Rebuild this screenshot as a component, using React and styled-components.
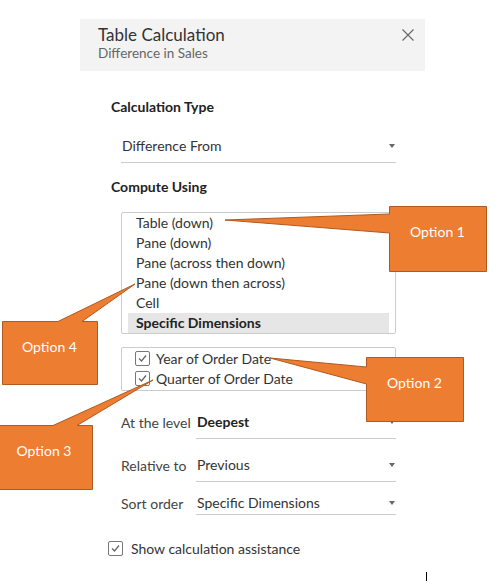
import styled, { createGlobalStyle } from "styled-components";

const GlobalStyle = createGlobalStyle`
  html, body {
    margin: 0;
    padding: 0;
    background: #ffffff;
  }
  body {
    font-family: Lato, "Open Sans", sans-serif;
    color: #333333;
  }
`;

const computeOptions = [
  "Table (down)",
  "Pane (down)",
  "Pane (across then down)",
  "Pane (down then across)",
  "Cell",
  "Specific Dimensions",
];

const dimensions = ["Year of Order Date", "Quarter of Order Date"];

const callouts = [
  { label: "Option 1", left: 389, top: 206, width: 97, d: "M389.5,206.5 H486.5 V271.5 H389.5 V233 L225,220 L389.5,214 Z" },
  { label: "Option 2", left: 366, top: 357, width: 97, d: "M366.5,357.5 H463.5 V421.5 H366.5 V384 L270,358 L366.5,367 Z" },
  { label: "Option 4", left: 2, top: 321, width: 95, d: "M2.5,321.5 H58 L135,284 L82,321.5 H97.5 V384.5 H2.5 Z" },
  { label: "Option 3", left: -4, top: 425, width: 96, d: "M-4,425.5 H53 L153,380 L77,425.5 H92.5 V489.5 H-4 Z" },
];

export default function App() {
  return (
    <>
      <GlobalStyle />
      <Page>
        <Header>
          <div>
            <Title>Table Calculation</Title>
            <Subtitle>Difference in Sales</Subtitle>
          </div>
          <Close viewBox="0 0 12 12">
            <path d="M0.5 0.5 L11.5 11.5 M11.5 0.5 L0.5 11.5" />
          </Close>
        </Header>

        <Body>
          <SectionTitle $top={27}>Calculation Type</SectionTitle>
          <Select>
            <span>Difference From</span>
            <Caret />
          </Select>

          <SectionTitle $top={15}>Compute Using</SectionTitle>
          <ListBox>
            {computeOptions.map((option, index) => (
              <ListRow key={index} $selected={index === computeOptions.length - 1}>
                {option}
              </ListRow>
            ))}
          </ListBox>

          <CheckList>
            {dimensions.map((dim, index) => (
              <CheckRow key={index}>
                <CheckBox />
                <span>{dim}</span>
              </CheckRow>
            ))}
          </CheckList>

          <FieldRow $top={14} $height={34}>
            <FieldLabel>At the level</FieldLabel>
            <FieldValue $bold>
              <span>Deepest</span>
              <Caret />
            </FieldValue>
          </FieldRow>
          <FieldRow $top={9} $height={34}>
            <FieldLabel>Relative to</FieldLabel>
            <FieldValue>
              <span>Previous</span>
              <Caret />
            </FieldValue>
          </FieldRow>
          <FieldRow $top={9} $height={24}>
            <FieldLabel>Sort order</FieldLabel>
            <FieldValue>
              <span>Specific Dimensions</span>
              <Caret />
            </FieldValue>
          </FieldRow>

          <AssistRow>
            <CheckBox />
            <span>Show calculation assistance</span>
          </AssistRow>
        </Body>

        <Overlay viewBox="0 0 497 581">
          {callouts.map((c, index) => (
            <path key={index} d={c.d} />
          ))}
        </Overlay>
        {callouts.map((c, index) => (
          <CalloutLabel key={index} style={{ left: c.left, top: c.top, width: c.width }}>
            {c.label}
          </CalloutLabel>
        ))}
        <Cursor />
      </Page>
    </>
  );
}

function CheckBox() {
  return (
    <Box>
      <svg viewBox="0 0 13 13" width="13" height="13">
        <polyline points="3,6.5 5.5,9 10,3.5" />
      </svg>
    </Box>
  );
}

const Page = styled.div`
  position: relative;
  width: 497px;
  height: 581px;
  overflow: hidden;
  padding-top: 19px;
  box-sizing: border-box;
`;

const Header = styled.div`
  margin-left: 80px;
  width: 345px;
  height: 52px;
  background-color: #f3f3f3;
  display: flex;
  justify-content: space-between;
  align-items: flex-start;
  padding: 6px 11px 0 18px;
  box-sizing: border-box;
`;

const Title = styled.div`
  font-size: 17px;
  line-height: 20px;
  color: #333333;
`;

const Subtitle = styled.div`
  font-size: 13.5px;
  line-height: 16px;
  color: #666666;
`;

const Close = styled.svg`
  width: 12px;
  height: 12px;
  margin-top: 4px;
  stroke: #666666;
  stroke-width: 1.1;
  fill: none;
`;

const Body = styled.div`
  margin-left: 108px;
  width: 288px;
  font-size: 14px;
`;

const SectionTitle = styled.div`
  margin-top: ${(p) => p.$top}px;
  padding-left: 3px;
  font-size: 14px;
  line-height: 18px;
  font-weight: 700;
  color: #222222;
`;

const Select = styled.div`
  margin-top: 13px;
  margin-left: 13px;
  width: 275px;
  height: 34px;
  box-sizing: border-box;
  padding-left: 1px;
  border-bottom: 1px solid #cccccc;
  display: flex;
  align-items: center;
  justify-content: space-between;
  color: #333333;
`;

const Caret = styled.span`
  width: 0;
  height: 0;
  margin-right: 1px;
  border-left: 3px solid transparent;
  border-right: 3px solid transparent;
  border-top: 4px solid #666666;
`;

const ListBox = styled.div`
  margin-top: 16px;
  margin-left: 13px;
  width: 275px;
  border: 1px solid #cccccc;
  border-radius: 2px;
  padding: 0 6px;
  box-sizing: border-box;
`;

const ListRow = styled.div`
  height: 20px;
  line-height: 20px;
  padding-left: 8px;
  color: ${(p) => (p.$selected ? "#222222" : "#333333")};
  font-weight: ${(p) => (p.$selected ? 700 : 400)};
  background-color: ${(p) => (p.$selected ? "#e6e6e6" : "transparent")};
`;

const CheckList = styled.div`
  margin-top: 13px;
  margin-left: 13px;
  width: 275px;
  height: 44px;
  border: 1px solid #cccccc;
  border-radius: 2px;
  padding: 0 0 0 13px;
  box-sizing: border-box;
`;

const CheckRow = styled.div`
  height: 20px;
  display: flex;
  align-items: center;
  gap: 6px;
  color: #333333;
`;

const Box = styled.span`
  width: 15px;
  height: 15px;
  box-sizing: border-box;
  border: 1px solid #777777;
  border-radius: 2px;
  background: #ffffff;
  display: flex;
  align-items: center;
  justify-content: center;
  flex-shrink: 0;

  polyline {
    fill: none;
    stroke: #666666;
    stroke-width: 1.3;
  }
`;

const FieldRow = styled.div`
  margin-top: ${(p) => p.$top}px;
  margin-left: 13px;
  width: 275px;
  height: ${(p) => p.$height}px;
  display: grid;
  grid-template-columns: 75px 1fr;
`;

const FieldLabel = styled.div`
  display: flex;
  align-items: center;
  color: #444444;
`;

const FieldValue = styled.div`
  display: flex;
  align-items: center;
  justify-content: space-between;
  padding-left: 1px;
  border-bottom: 1px solid #cccccc;
  color: ${(p) => (p.$bold ? "#222222" : "#333333")};
  font-weight: ${(p) => (p.$bold ? 700 : 400)};
`;

const AssistRow = styled.div`
  margin-top: 23px;
  height: 20px;
  display: flex;
  align-items: center;
  gap: 8px;
  color: #333333;
`;

const Overlay = styled.svg`
  position: absolute;
  left: 0;
  top: 0;
  width: 497px;
  height: 581px;
  pointer-events: none;

  path {
    fill: #ed7d31;
    stroke: #ae5a21;
    stroke-width: 1;
  }
`;

const CalloutLabel = styled.div`
  position: absolute;
  padding-top: 18px;
  text-align: center;
  font-family: Lato, "Open Sans", sans-serif;
  font-size: 14px;
  line-height: 16px;
  color: #ffffff;
`;

const Cursor = styled.div`
  position: absolute;
  left: 426px;
  top: 572px;
  width: 1px;
  height: 9px;
  background: #000000;
`;
